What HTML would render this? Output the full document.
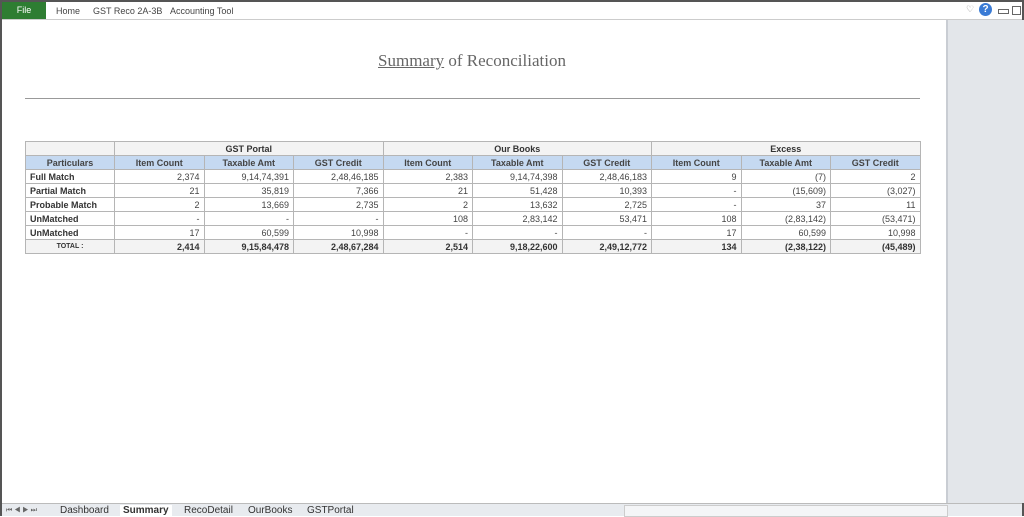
<!DOCTYPE html>
<html><head><style>
body{margin:0;width:1024px;height:516px;overflow:hidden;position:relative;background:#fff;font-family:"Liberation Sans",sans-serif}
.frame{position:absolute;left:0;top:0;width:1020px;height:512px;border:2px solid #555;}
.rib{position:absolute;left:2px;top:2px;width:1020px;height:17px;background:#fff;border-bottom:1px solid #ccc;font-size:9px;color:#444}
.rib span{position:absolute;top:4px}
.file{position:absolute;left:0;top:0;width:44px;height:17px;background:#2e7d32;color:#fff;font-size:9px;text-align:center;line-height:17px}
.side{position:absolute;left:946px;top:20px;width:76px;height:483px;background:#e3e6ea;border-left:2px solid #c9cdd3}
.title{position:absolute;left:0;width:944px;top:51px;text-align:center;font-family:"Liberation Serif",serif;font-size:17px;color:#666}
.hr{position:absolute;left:25px;top:98px;width:895px;height:1px;background:#999}
table{position:absolute;left:25px;top:141px;border-collapse:collapse;font-size:9px;color:#444;table-layout:fixed}
td{border:1px solid #b5b5b5;height:13px;padding:0 4px;text-align:right;white-space:nowrap}
.h1 td{text-align:center;font-weight:bold;background:#f3f3f3;height:13px;color:#333}
.h2 td{text-align:center;font-weight:bold;background:#c5d9f1;color:#444}
td.l{text-align:left;font-weight:bold;color:#333}
.t td{font-weight:bold;background:#f3f3f3;color:#333}
.t td.c{text-align:center;font-size:7px}
table{border:1.5px solid #555}
.tabs{position:absolute;left:2px;top:503px;width:1020px;height:12px;background:#e8ebef;border-top:1px solid #bbb;font-size:10px;color:#333}
.tabs span{position:absolute;top:1px;line-height:12px}
</style></head><body>
<div class="frame"></div>
<div class="rib"><div class="file">File</div><span style="left:54px">Home</span><span style="left:91px">GST Reco 2A-3B</span><span style="left:168px">Accounting Tool</span>
<span style="left:964px;top:2px;color:#888">♡</span>
<div style="position:absolute;left:977px;top:1px;width:13px;height:13px;border-radius:50%;background:#3a7bd5;color:#fff;font-weight:bold;font-size:10px;text-align:center;line-height:13px">?</div>
<div style="position:absolute;left:996px;top:7px;width:9px;height:3px;border:1px solid #666"></div>
<div style="position:absolute;left:1010px;top:4px;width:7px;height:7px;border:1px solid #666"></div>
</div>
<div class="side"></div>
<div class="title"><u>Summary</u> of Reconciliation</div>
<div class="hr"></div>
<table>
<colgroup><col style="width:89px"><col span="9" style="width:89.5px"></colgroup>
<tr class="h1"><td></td><td colspan="3">GST Portal</td><td colspan="3">Our Books</td><td colspan="3">Excess</td></tr>
<tr class="h2"><td>Particulars</td><td>Item Count</td><td>Taxable Amt</td><td>GST Credit</td><td>Item Count</td><td>Taxable Amt</td><td>GST Credit</td><td>Item Count</td><td>Taxable Amt</td><td>GST Credit</td></tr>
<tr><td class="l">Full Match</td><td>2,374</td><td>9,14,74,391</td><td>2,48,46,185</td><td>2,383</td><td>9,14,74,398</td><td>2,48,46,183</td><td>9</td><td>(7)</td><td>2</td></tr>
<tr><td class="l">Partial Match</td><td>21</td><td>35,819</td><td>7,366</td><td>21</td><td>51,428</td><td>10,393</td><td>-</td><td>(15,609)</td><td>(3,027)</td></tr>
<tr><td class="l">Probable Match</td><td>2</td><td>13,669</td><td>2,735</td><td>2</td><td>13,632</td><td>2,725</td><td>-</td><td>37</td><td>11</td></tr>
<tr><td class="l">UnMatched</td><td>-</td><td>-</td><td>-</td><td>108</td><td>2,83,142</td><td>53,471</td><td>108</td><td>(2,83,142)</td><td>(53,471)</td></tr>
<tr><td class="l">UnMatched</td><td>17</td><td>60,599</td><td>10,998</td><td>-</td><td>-</td><td>-</td><td>17</td><td>60,599</td><td>10,998</td></tr>
<tr class="t"><td class="c">TOTAL :</td><td>2,414</td><td>9,15,84,478</td><td>2,48,67,284</td><td>2,514</td><td>9,18,22,600</td><td>2,49,12,772</td><td>134</td><td>(2,38,122)</td><td>(45,489)</td></tr>
</table>
<div class="tabs">
<span style="left:4px;font-size:7px;color:#666">⏮ ◀ ▶ ⏭</span>
<span style="left:58px">Dashboard</span>
<span style="left:118px;background:#fff;font-weight:bold;padding:0 3px">Summary</span>
<span style="left:182px">RecoDetail</span><span style="left:246px">OurBooks</span><span style="left:305px">GSTPortal</span>
<div style="position:absolute;left:622px;top:1px;width:322px;height:10px;background:#f4f5f7;border:1px solid #ccc"></div>
</div>
</body></html>
